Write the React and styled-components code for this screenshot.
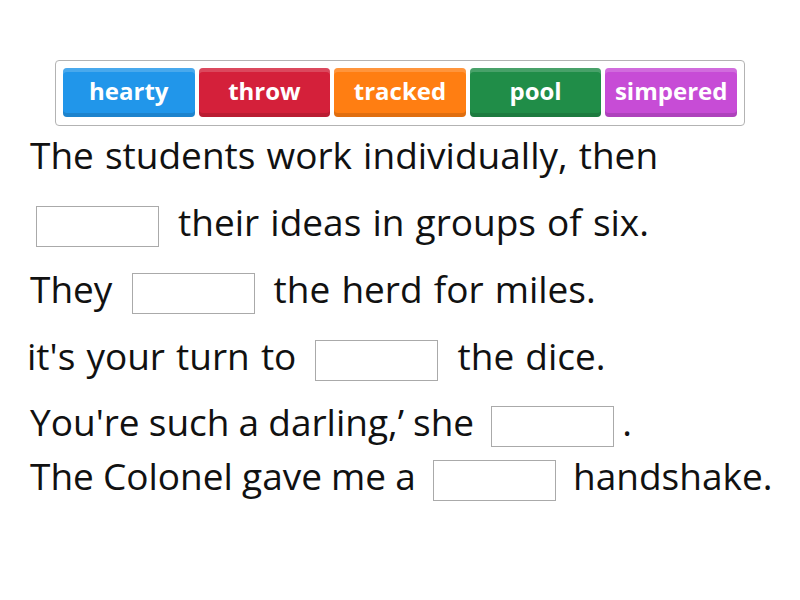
import React from 'react';
import styled, { createGlobalStyle } from 'styled-components';

const GlobalStyle = createGlobalStyle`
  html, body {
    margin: 0;
    padding: 0;
    background: #fff;
  }
  body {
    font-family: "Open Sans", "Noto Sans", sans-serif;
    color: #111;
  }
`;

const Page = styled.div`
  width: 800px;
  height: 600px;
  overflow: hidden;
  padding-top: 60px;
  box-sizing: border-box;
`;

const Tray = styled.div`
  width: 690px;
  margin: 0 auto;
  box-sizing: border-box;
  border: 1px solid #b3b3b3;
  border-radius: 4px;
  padding: 7px 7px 8px;
  display: flex;
  gap: 4px;
`;

const Tile = styled.div`
  flex: 1;
  height: 49px;
  box-sizing: border-box;
  padding-bottom: 5px;
  border-radius: 4px;
  display: flex;
  align-items: center;
  justify-content: center;
  color: #fff;
  font-weight: 700;
  font-size: 24px;
  background: ${p => p.color};
  box-shadow: inset 0 4px 0 rgba(255, 255, 255, 0.18),
    inset 0 -4px 0 rgba(0, 0, 0, 0.12);
`;

const Lines = styled.div`
  padding-left: 30px;
  margin-top: -5px;
`;

const Row = styled.div`
  height: ${p => (p.compact ? 54 : 67)}px;
  line-height: ${p => (p.compact ? 54 : 67)}px;
  font-size: 37px;
  word-spacing: ${p => (p.compact ? -0.5 : 1.5)}px;
  white-space: pre;
  margin-left: ${p => p.shift || 0}px;
  margin-top: ${p => p.gapTop || 0}px;
`;

const Blank = styled.span`
  display: inline-block;
  width: 121px;
  height: 39px;
  border: 1px solid #aaa;
  background: #fff;
  margin: 0 8px;
  vertical-align: middle;
`;

const words = [
  { text: 'hearty', color: '#2196ea' },
  { text: 'throw', color: '#d4203a' },
  { text: 'tracked', color: '#ff7e12' },
  { text: 'pool', color: '#208d48' },
  { text: 'simpered', color: '#c74cd6' },
];

export default function App() {
  return (
    <Page>
      <GlobalStyle />
      <Tray>
        {words.map(w => (
          <Tile key={w.text} color={w.color}>{w.text}</Tile>
        ))}
      </Tray>
      <Lines>
        <Row>The students work individually, then</Row>
        <Row shift={-2}><Blank />{' their ideas in groups of six.'}</Row>
        <Row>{'They '}<Blank />{' the herd for miles.'}</Row>
        <Row shift={-3}>{"it's your turn to "}<Blank />{' the dice.'}</Row>
        <Row compact gapTop={6}>{'You\'re such a darling,\u2019 she '}<Blank />.</Row>
        <Row compact>{'The Colonel gave me a '}<Blank />{' handshake.'}</Row>
      </Lines>
    </Page>
  );
}
